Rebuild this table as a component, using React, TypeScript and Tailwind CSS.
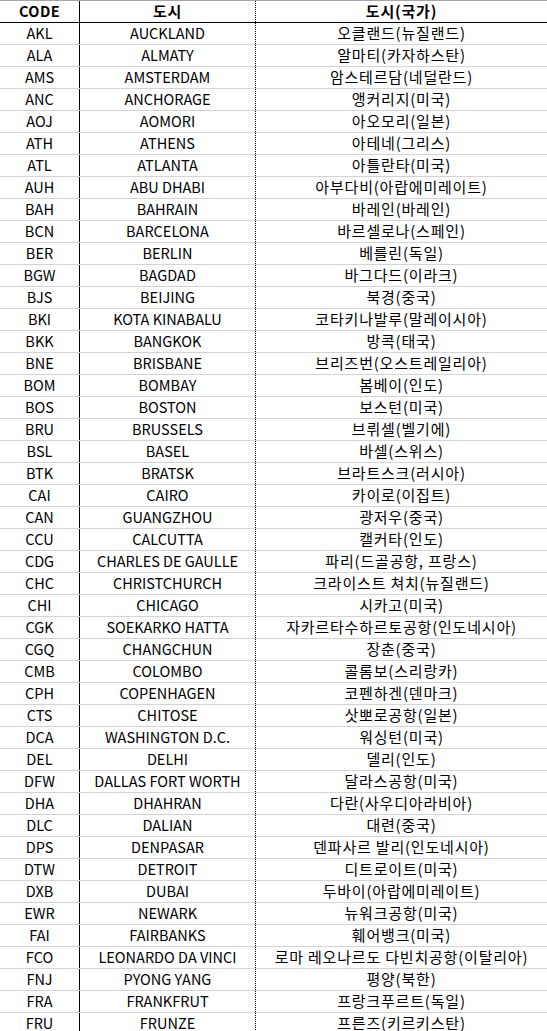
const ROWS: [string, string, string][] = [
  ['AKL', 'AUCKLAND', '오클랜드(뉴질랜드)'],
  ['ALA', 'ALMATY', '알마티(카자하스탄)'],
  ['AMS', 'AMSTERDAM', '암스테르담(네덜란드)'],
  ['ANC', 'ANCHORAGE', '앵커리지(미국)'],
  ['AOJ', 'AOMORI', '아오모리(일본)'],
  ['ATH', 'ATHENS', '아테네(그리스)'],
  ['ATL', 'ATLANTA', '아틀란타(미국)'],
  ['AUH', 'ABU DHABI', '아부다비(아랍에미레이트)'],
  ['BAH', 'BAHRAIN', '바레인(바레인)'],
  ['BCN', 'BARCELONA', '바르셀로나(스페인)'],
  ['BER', 'BERLIN', '베를린(독일)'],
  ['BGW', 'BAGDAD', '바그다드(이라크)'],
  ['BJS', 'BEIJING', '북경(중국)'],
  ['BKI', 'KOTA KINABALU', '코타키나발루(말레이시아)'],
  ['BKK', 'BANGKOK', '방콕(태국)'],
  ['BNE', 'BRISBANE', '브리즈번(오스트레일리아)'],
  ['BOM', 'BOMBAY', '봄베이(인도)'],
  ['BOS', 'BOSTON', '보스턴(미국)'],
  ['BRU', 'BRUSSELS', '브뤼셀(벨기에)'],
  ['BSL', 'BASEL', '바셀(스위스)'],
  ['BTK', 'BRATSK', '브라트스크(러시아)'],
  ['CAI', 'CAIRO', '카이로(이집트)'],
  ['CAN', 'GUANGZHOU', '광저우(중국)'],
  ['CCU', 'CALCUTTA', '캘커타(인도)'],
  ['CDG', 'CHARLES DE GAULLE', '파리(드골공항, 프랑스)'],
  ['CHC', 'CHRISTCHURCH', '크라이스트 쳐치(뉴질랜드)'],
  ['CHI', 'CHICAGO', '시카고(미국)'],
  ['CGK', 'SOEKARKO HATTA', '자카르타수하르토공항(인도네시아)'],
  ['CGQ', 'CHANGCHUN', '장춘(중국)'],
  ['CMB', 'COLOMBO', '콜롬보(스리랑카)'],
  ['CPH', 'COPENHAGEN', '코펜하겐(덴마크)'],
  ['CTS', 'CHITOSE', '삿뽀로공항(일본)'],
  ['DCA', 'WASHINGTON D.C.', '워싱턴(미국)'],
  ['DEL', 'DELHI', '델리(인도)'],
  ['DFW', 'DALLAS FORT WORTH', '달라스공항(미국)'],
  ['DHA', 'DHAHRAN', '다란(사우디아라비아)'],
  ['DLC', 'DALIAN', '대련(중국)'],
  ['DPS', 'DENPASAR', '덴파사르 발리(인도네시아)'],
  ['DTW', 'DETROIT', '디트로이트(미국)'],
  ['DXB', 'DUBAI', '두바이(아랍에미레이트)'],
  ['EWR', 'NEWARK', '뉴워크공항(미국)'],
  ['FAI', 'FAIRBANKS', '훼어뱅크(미국)'],
  ['FCO', 'LEONARDO DA VINCI', '로마 레오나르도 다빈치공항(이탈리아)'],
  ['FNJ', 'PYONG YANG', '평양(북한)'],
  ['FRA', 'FRANKFRUT', '프랑크푸르트(독일)'],
  ['FRU', 'FRUNZE', '프른즈(키르키스탄)'],
];

const FONT = "font-['Noto_Sans_CJK_KR','Noto_Sans',sans-serif]";

export default function App() {
  return (
    <div className={`w-[547px] bg-white text-black text-[14.5px] ${FONT}`}>
      <div className="grid grid-cols-[80px_176px_1fr] border-t border-[#a6a6a6] border-b border-b-black h-[23px] font-bold leading-[19px] overflow-hidden">
        <div className="text-center border-r border-black tracking-[0.4px]">CODE</div>
        <div className="text-center border-r border-dotted border-black text-[15px] tracking-[0.8px]">도시</div>
        <div className="text-center text-[15px] tracking-[0.8px]">도시(국가)</div>
      </div>
      {ROWS.map(([code, city, kr]) => (
        <div
          key={code}
          className="grid grid-cols-[80px_176px_1fr] border-b border-[#d4d4d4] h-[22px] leading-[19px] overflow-hidden"
        >
          <div className="text-center border-r border-r-black">{code}</div>
          <div className="text-center border-r border-dotted border-r-black">{city}</div>
          <div className="text-center whitespace-nowrap text-[15px] tracking-[0.8px]">{kr}</div>
        </div>
      ))}
    </div>
  );
}
